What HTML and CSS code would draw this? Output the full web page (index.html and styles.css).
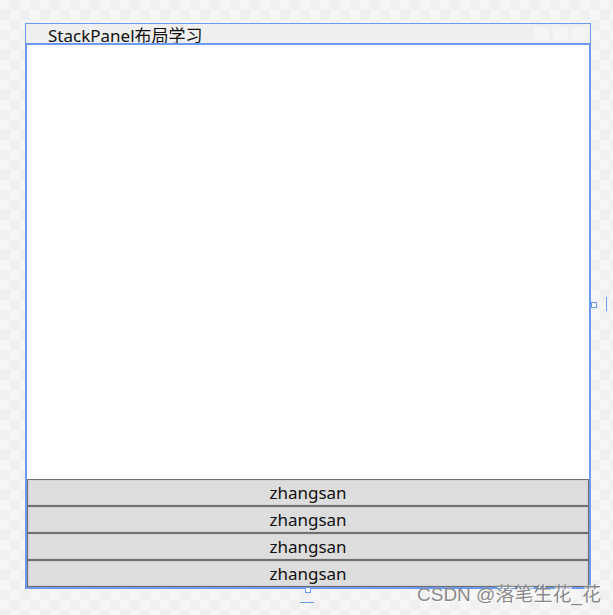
FILE: index.html
```html
<!DOCTYPE html>
<html>
<head>
<meta charset="utf-8">
<link rel="stylesheet" href="styles.css">
</head>
<body>
<div class="window">
  <div class="titlebar">
    <span class="title">StackPanel布局学习</span>
    <div class="caps"><span class="cap"></span><span class="cap"></span><span class="cap"></span></div>
  </div>
  <div class="content">
    <div class="spacer"></div>
    <div class="stack">
      <div class="btn">zhangsan</div>
      <div class="btn">zhangsan</div>
      <div class="btn">zhangsan</div>
      <div class="btn">zhangsan</div>
    </div>
  </div>
  <span class="handle handle-r"></span>
  <span class="tick tick-r"></span>
  <span class="handle handle-b"></span>
  <span class="tick tick-b"></span>
</div>
<div class="watermark">CSDN @落笔生花_花</div>
</body>
</html>
```
FILE: styles.css
```css
html, body {
  margin: 0;
  padding: 0;
}
body {
  width: 613px;
  height: 615px;
  overflow: hidden;
  position: relative;
  background-color: #f6f6f6;
  background-image: conic-gradient(#f0f0f0 25%, transparent 0 50%, #f0f0f0 0 75%, transparent 0);
  background-size: 20px 20px;
  font-family: "Noto Sans", "Noto Sans CJK SC", sans-serif;
}
.window {
  position: absolute;
  left: 25px;
  top: 23px;
  width: 566px;
  display: flex;
  flex-direction: column;
}
.titlebar {
  height: 19px;
  border: 1px solid #6a9af2;
  border-bottom: none;
  width: 564px;
  background: #efefef;
  display: flex;
  align-items: center;
  justify-content: space-between;
}
.title {
  margin-left: 22px;
  font-size: 17px;
  line-height: 19px;
  color: #111;
  padding-top: 4px;
}
.caps {
  display: flex;
  gap: 4px;
  margin-right: 3px;
}
.cap {
  width: 15px;
  height: 13px;
  background: #f5f5f5;
}
.content {
  height: 542px;
  border: 2px solid #6a9af2;
  background: #fff;
  display: flex;
  flex-direction: column;
}
.spacer {
  flex: 1;
}
.stack {
  display: flex;
  flex-direction: column;
}
.btn {
  height: 25px;
  border: 1px solid #707070;
  background: #dddddd;
  box-shadow: inset 0 0 0 1px #d2d2d2;
  text-align: center;
  font-size: 17px;
  line-height: 25px;
  color: #111;
}
.handle {
  position: absolute;
  width: 4px;
  height: 4px;
  border: 1px solid #6a9af2;
  background: #fff;
}
.handle-r {
  left: 566px;
  top: 279px;
}
.handle-b {
  left: 280px;
  top: 564px;
}
.tick {
  position: absolute;
  background: #6a9af2;
}
.tick-r {
  left: 581px;
  top: 274px;
  width: 1px;
  height: 14px;
}
.tick-b {
  left: 275px;
  top: 579px;
  width: 14px;
  height: 1px;
}
.watermark {
  position: absolute;
  left: 417px;
  top: 584px;
  font-family: "Liberation Sans", "Noto Sans CJK SC", sans-serif;
  font-size: 19px;
  color: #8a8a8a;
  text-shadow: 1px 1px 0 #fff;
  line-height: 22px;
}
```
